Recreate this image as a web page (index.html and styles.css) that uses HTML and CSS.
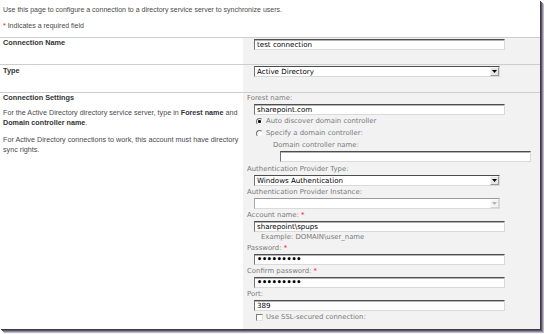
FILE: index.html
```html
<!DOCTYPE html>
<html>
<head>
<meta charset="utf-8">
<link rel="stylesheet" href="styles.css">
</head>
<body>
<div class="frame">
  <div class="intro">
    <p>Use this page to configure a connection to a directory service server to synchronize users.</p>
    <p class="req"><span class="star">*</span> Indicates a required field</p>
  </div>

  <section class="sec sec-name">
    <div class="left"><h3>Connection Name</h3></div>
    <div class="right"><input class="txt" type="text" value="test connection"></div>
  </section>

  <section class="sec sec-type">
    <div class="left"><h3 class="h-type">Type</h3></div>
    <div class="right">
      <div class="sel"><span class="val">Active Directory</span><span class="btn"><svg width="5" height="3" viewBox="0 0 5 3"><path d="M0 0h5L2.5 3z" fill="#000"/></svg></span></div>
    </div>
  </section>

  <section class="sec sec-settings">
    <div class="left">
      <h3>Connection Settings</h3>
      <p class="para">For the Active Directory directory service server, type in <b>Forest name</b> and<br><b>Domain controller name</b>.</p>
      <p class="para p2">For Active Directory connections to work, this account must have directory<br>sync rights.</p>
    </div>
    <div class="right settings">
      <label class="lbl first">Forest name:</label>
      <input class="txt" type="text" value="sharepoint.com">
      <div class="opt"><span class="radio on"></span>Auto discover domain controller</div>
      <div class="opt"><span class="radio"></span>Specify a domain controller:</div>
      <label class="lbl sub">Domain controller name:</label>
      <input class="txt sub-in" type="text" value="">
      <label class="lbl gap">Authentication Provider Type:</label>
      <div class="sel"><span class="val">Windows Authentication</span><span class="btn"><svg width="5" height="3" viewBox="0 0 5 3"><path d="M0 0h5L2.5 3z" fill="#000"/></svg></span></div>
      <label class="lbl">Authentication Provider Instance:</label>
      <div class="sel disabled"><span class="val"></span><span class="btn"><svg width="5" height="3" viewBox="0 0 5 3"><path d="M0 0h5L2.5 3z" fill="#b5b5b5"/></svg></span></div>
      <label class="lbl">Account name: <span class="star">*</span></label>
      <input class="txt" type="text" value="sharepoint\spups">
      <div class="hint">Example: DOMAIN\user_name</div>
      <label class="lbl">Password: <span class="star">*</span></label>
      <input class="txt pw" type="password" value="xxxxxxxxx">
      <label class="lbl">Confirm password: <span class="star">*</span></label>
      <input class="txt pw" type="password" value="xxxxxxxxx">
      <label class="lbl">Port:</label>
      <input class="txt" type="text" value="389">
      <div class="opt chk-row"><span class="check"></span>Use SSL-secured connection:</div>
    </div>
  </section>
</div>
</body>
</html>
```

FILE: styles.css
```css
* { box-sizing: border-box; margin: 0; padding: 0; }
html, body { background: #fff; }
body { width: 544px; height: 334px; overflow: hidden; }

.frame {
  width: 540px;
  height: 329px;
  background: #fff;
  display: flex;
  flex-direction: column;
  overflow: hidden;
  box-shadow: 1px 1px 0 #3f3a45, 2px 2px 0 #5c5566, 3px 3px 1px #8e879a, 4px 4px 1px #c9c4d0;
}

.intro {
  height: 37px;
  padding: 5px 0 0 3px;
  font-family: "Liberation Sans", Arial, sans-serif;
  font-size: 7px;
  color: #4a4a4a;
  flex: none;
}
.intro p { line-height: 10px; white-space: nowrap; }
.intro .req { margin-top: 6px; }

.star { color: #ff0000; }

.sec {
  display: grid;
  grid-template-columns: 243px 297px;
  border-top: 1px solid #cdcdcd;
  flex: none;
}
.sec-name { height: 27px; }
.sec-type { height: 28px; }
.sec-settings { flex: 1; }

.left {
  padding-left: 3px;
  font-family: "Liberation Sans", Arial, sans-serif;
  font-size: 7.2px;
  color: #4a4a4a;
}
.left h3 {
  font-size: 7.3px;
  font-weight: bold;
  color: #333;
  line-height: 10px;
}
.left .h-type { padding-top: 1px; }
.left .para { line-height: 10px; margin-top: 5px; white-space: nowrap; }
.left .para b { color: #333; }
.left .p2 { margin-top: 7px; }

.right {
  background: #f2f2f2;
  padding-left: 4px;
  font-family: "DejaVu Sans", Verdana, sans-serif;
  font-size: 6.9px;
  color: #7a7a7a;
}
.sec-name .right, .sec-type .right { padding-top: 1px; }

.settings {
  display: flex;
  flex-direction: column;
  align-items: flex-start;
}

.txt {
  display: block;
  width: 251px;
  height: 11px;
  margin-left: 7px;
  padding: 0 2px;
  background: #fff;
  border: 1px solid #d9d9d9;
  border-top-color: #4d4d4d;
  border-left-color: #727272;
  box-shadow: inset 0 1px 0 #b4b4b4;
  font-family: "DejaVu Sans", Verdana, sans-serif;
  font-size: 7.1px;
  color: #000;
  outline: none;
}
.pw { font-size: 8px; letter-spacing: -0.2px; font-weight: bold; }

.sel {
  display: flex;
  align-items: center;
  width: 246px;
  height: 11px;
  margin-left: 7px;
  background: #fff;
  border: 1px solid #d9d9d9;
  border-top-color: #4d4d4d;
  border-left-color: #727272;
  font-size: 7.1px;
  color: #000;
}
.sel .val { flex: 1; padding-left: 2px; line-height: 9px; white-space: nowrap; }
.sel .btn {
  width: 9px;
  height: 9px;
  display: flex;
  align-items: center;
  justify-content: center;
  background: #e6e6e6;
  border: 1px solid #9a9a9a;
  border-top-color: #f6f6f6;
  border-left-color: #f6f6f6;
}
.sel.disabled { border-color: #dadada; border-top-color: #9a9a9a; border-left-color: #a8a8a8; }
.sel.disabled .btn { background: #f3f3f3; border-color: #fafafa #d4d4d4 #d4d4d4 #fafafa; }

.lbl { display: block; line-height: 12px; white-space: nowrap; }
.lbl.first { line-height: 11px; }
.lbl.sub { margin-left: 26px; }
.lbl.gap { margin-top: 1px; }
.sub-in { margin-left: 33px; }

.opt {
  display: flex;
  align-items: center;
  height: 12px;
  padding-left: 9px;
  white-space: nowrap;
}
.radio {
  width: 7px;
  height: 7px;
  margin-right: 3px;
  border-radius: 50%;
  background: #fff;
  border: 1px solid #f2f2f2;
  border-top-color: #6f6f6f;
  border-left-color: #6f6f6f;
}
.radio.on { background: radial-gradient(circle, #111 0 1.3px, #fff 1.8px); }

.hint { margin-left: 14px; line-height: 10px; white-space: nowrap; }

.check {
  width: 7px;
  height: 7px;
  margin-right: 3px;
  background: #fff;
  border: 1px solid #e2e2e2;
  border-top-color: #7a7a7a;
  border-left-color: #7a7a7a;
}
```
